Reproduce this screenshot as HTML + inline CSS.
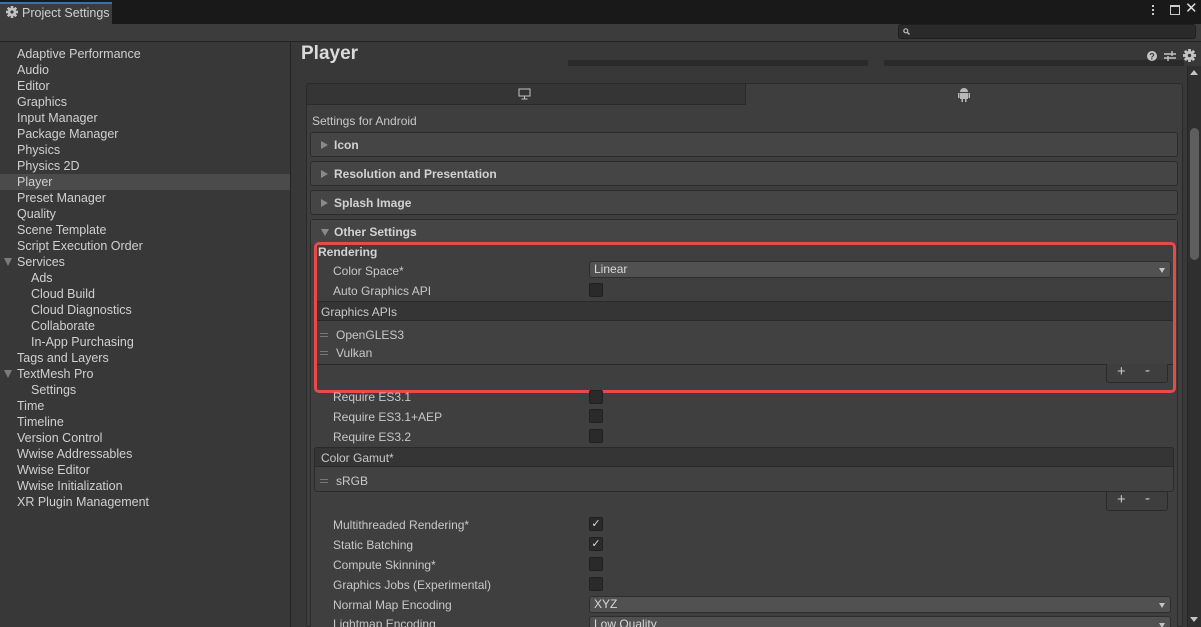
<!DOCTYPE html>
<html><head><meta charset="utf-8"><style>
*{margin:0;padding:0;box-sizing:border-box}
html{width:1201px;height:627px;overflow:hidden}
body{width:1201px;height:627px;overflow:hidden;background:#383838;font-family:"Liberation Sans",sans-serif;font-size:12px;color:#c8c8c8;position:relative}
.a{position:absolute}
.t{position:absolute;white-space:nowrap;line-height:14px}
.side .t{left:17px}
.fold{position:absolute;left:310px;width:868px;background:#454545;border:1px solid #2b2b2b;border-radius:3px}
.fold b{position:absolute;left:23px;top:5px;font-size:12px;color:#d2d2d2}
.tri{position:absolute;left:10px;top:8px;width:0;height:0;border-left:7px solid #8a8a8a;border-top:4px solid transparent;border-bottom:4px solid transparent}
.cb{position:absolute;left:589px;width:14px;height:14px;background:#2a2a2a;border:1px solid #202020;border-radius:2px}
.dd{position:absolute;left:589px;width:582px;height:17px;background:#515151;border:1px solid #2e2e2e;border-radius:3px;padding-left:4px;line-height:15px;color:#d8d8d8}
.dd:after{content:"";position:absolute;right:5px;top:6px;border-top:5px solid #c4c4c4;border-left:3.5px solid transparent;border-right:3.5px solid transparent}
.hb{position:absolute;width:8px;height:4px;border-top:1px solid #777;border-bottom:1px solid #777}
.pm{position:absolute;width:62px;height:19px;background:#3e3e3e;border:1px solid #2a2a2a;border-top:none;border-radius:0 0 3px 3px;color:#c8c8c8;font-size:15px}
</style></head><body>
<svg width="0" height="0" style="position:absolute"><defs><g id="gear"><g fill="#c4c4c4"><rect x="4.7" y="0" width="2.6" height="12"/><rect x="0" y="4.7" width="12" height="2.6"/><rect x="4.7" y="0" width="2.6" height="12" transform="rotate(45 6 6)"/><rect x="4.7" y="0" width="2.6" height="12" transform="rotate(-45 6 6)"/><circle cx="6" cy="6" r="4.2"/></g><circle cx="6" cy="6" r="1.6" fill="#3a3a3a"/></g></defs></svg>
<!-- title bar -->
<div class="a" style="left:0;top:0;width:1201px;height:24px;background:#191919"></div>
<div class="a" style="left:0;top:2px;width:112px;height:22px;background:#3c3c3c;border-top:2px solid #3a72b0"></div>
<svg class="a" style="left:6px;top:6px" width="12" height="12"><use href="#gear"/></svg>
<div class="t" style="left:22px;top:6px;color:#d0d0d0;font-size:12.5px">Project Settings</div>
<div class="a" style="left:1152px;top:5px;width:2px;height:2px;background:#ccc;box-shadow:0 4px #ccc,0 8px #ccc"></div>
<div class="a" style="left:1170px;top:5px;width:10px;height:10px;border:1px solid #ccc;border-top-width:2px"></div>
<div class="t" style="left:1185px;top:2px;font-size:15px;color:#ddd">✕</div>
<!-- toolbar -->
<div class="a" style="left:0;top:24px;width:1201px;height:18px;background:#3c3c3c;border-bottom:1px solid #232323"></div>
<div class="a" style="left:898px;top:24px;width:298px;height:15px;background:#2a2a2a;border:1px solid #1f1f1f;border-radius:3px"></div>
<svg class="a" style="left:903px;top:28px" width="7" height="7"><circle cx="2.8" cy="2.8" r="2" fill="none" stroke="#bbb" stroke-width="1.2"/><path d="M4 4L6.5 6.5" stroke="#bbb" stroke-width="1.4"/></svg>
<!-- sidebar -->
<div class="a" style="left:290px;top:42px;width:1px;height:585px;background:#232323"></div>
<div class="a" style="left:0;top:174px;width:290px;height:16px;background:#4b4b4b"></div>
<div class="side" style="font-size:12.5px;color:#d0d0d0">
<div class="t" style="top:47px">Adaptive Performance</div>
<div class="t" style="top:63px">Audio</div>
<div class="t" style="top:79px">Editor</div>
<div class="t" style="top:95px">Graphics</div>
<div class="t" style="top:111px">Input Manager</div>
<div class="t" style="top:127px">Package Manager</div>
<div class="t" style="top:143px">Physics</div>
<div class="t" style="top:159px">Physics 2D</div>
<div class="t" style="top:175px">Player</div>
<div class="t" style="top:191px">Preset Manager</div>
<div class="t" style="top:207px">Quality</div>
<div class="t" style="top:223px">Scene Template</div>
<div class="t" style="top:239px">Script Execution Order</div>
<div class="t" style="top:255px">Services</div>
<div class="t" style="top:271px;left:31px">Ads</div>
<div class="t" style="top:287px;left:31px">Cloud Build</div>
<div class="t" style="top:303px;left:31px">Cloud Diagnostics</div>
<div class="t" style="top:319px;left:31px">Collaborate</div>
<div class="t" style="top:335px;left:31px">In-App Purchasing</div>
<div class="t" style="top:351px">Tags and Layers</div>
<div class="t" style="top:367px">TextMesh Pro</div>
<div class="t" style="top:383px;left:31px">Settings</div>
<div class="t" style="top:399px">Time</div>
<div class="t" style="top:415px">Timeline</div>
<div class="t" style="top:431px">Version Control</div>
<div class="t" style="top:447px">Wwise Addressables</div>
<div class="t" style="top:463px">Wwise Editor</div>
<div class="t" style="top:479px">Wwise Initialization</div>
<div class="t" style="top:495px">XR Plugin Management</div>
</div>
<div class="a" style="left:4px;top:258px;border-top:8px solid #7a7a7a;border-left:4.5px solid transparent;border-right:4.5px solid transparent"></div>
<div class="a" style="left:4px;top:370px;border-top:8px solid #7a7a7a;border-left:4.5px solid transparent;border-right:4.5px solid transparent"></div>
<!-- main header -->
<div class="a" style="left:568px;top:60px;width:300px;height:10px;background:#2a2a2a;border-radius:0 0 3px 3px"></div>
<div class="a" style="left:884px;top:60px;width:300px;height:10px;background:#2a2a2a;border-radius:0 0 3px 3px"></div>
<div class="t" style="left:301px;top:43px;font-size:19px;line-height:22px;color:#dadada;font-weight:bold;background:#383838;padding-right:8px">Player</div>
<svg class="a" style="left:1146px;top:50px" width="12" height="12"><circle cx="6" cy="6" r="5" fill="#c4c4c4"/><text x="6" y="9.5" font-size="9" font-weight="bold" text-anchor="middle" fill="#383838" font-family="Liberation Sans">?</text></svg>
<svg class="a" style="left:1164px;top:50px" width="12" height="12" stroke="#c4c4c4" stroke-width="1.4"><path d="M0 4H12M0 8H12M8 1V6M4 6V11"/></svg>
<svg class="a" style="left:1183px;top:49px" width="13" height="13" viewBox="0 0 12 12"><use href="#gear"/></svg>
<div class="a" style="left:295px;top:66px;width:890px;height:561px;background:#383838"></div>
<!-- platform box -->
<div class="a" style="left:306px;top:83px;width:877px;height:544px;background:#3e3e3e;border:1px solid #2a2a2a;border-radius:3px"></div>
<div class="a" style="left:306px;top:83px;width:440px;height:22px;background:#353535;border:1px solid #2a2a2a;border-radius:3px 0 0 0"></div>
<svg class="a" style="left:518px;top:88px" width="13" height="12" stroke="#c4c4c4" fill="none"><rect x="1" y="1" width="11" height="7"/><path d="M6.5 8V11M3.5 11H9.5"/></svg>
<svg class="a" style="left:958px;top:87px" width="12" height="15" fill="#b8b8b8"><path d="M2 5A4 4 0 0 1 10 5Z"/><rect x="2" y="6" width="8" height="6"/><rect x="0" y="6" width="1.5" height="5"/><rect x="10.5" y="6" width="1.5" height="5"/><rect x="3.5" y="12" width="1.5" height="3"/><rect x="7" y="12" width="1.5" height="3"/></svg>
<div class="t" style="left:312px;top:114px">Settings for Android</div>
<div class="fold" style="top:132px;height:25px"><i class="tri"></i><b>Icon</b></div>
<div class="fold" style="top:161px;height:25px"><i class="tri"></i><b>Resolution and Presentation</b></div>
<div class="fold" style="top:190px;height:25px"><i class="tri"></i><b>Splash Image</b></div>
<div class="fold" style="top:219px;height:408px;background:#3f3f3f;border-bottom:none;border-radius:3px 3px 0 0"><div class="a" style="left:0;top:0;width:866px;height:24px;background:#454545"></div><i class="a" style="left:10px;top:9px;border-top:7px solid #8a8a8a;border-left:4px solid transparent;border-right:4px solid transparent"></i><b>Other Settings</b></div>
<!-- rendering -->
<div class="t" style="left:318px;top:245px;font-weight:bold;color:#d2d2d2">Rendering</div>
<div class="t" style="left:333px;top:264px">Color Space*</div>
<div class="dd" style="top:261px">Linear</div>
<div class="t" style="left:333px;top:284px">Auto Graphics API</div>
<div class="cb" style="top:283px"></div>
<div class="a" style="left:314px;top:301px;width:860px;height:81px;background:#414141;border:1px solid #2a2a2a;border-radius:3px"></div>
<div class="a" style="left:314px;top:301px;width:860px;height:20px;background:#353535;border:1px solid #2a2a2a;border-radius:3px 3px 0 0"></div>
<div class="t" style="left:321px;top:305px">Graphics APIs</div>
<div class="hb" style="left:320px;top:333px"></div><div class="t" style="left:336px;top:328px">OpenGLES3</div>
<div class="hb" style="left:320px;top:351px"></div><div class="t" style="left:336px;top:346px">Vulkan</div>
<div class="a" style="left:314px;top:364px;width:860px;height:27px;background:#3f3f3f;border-top:1px solid #2a2a2a"></div>
<div class="pm" style="left:1106px;top:364px"><span class="a" style="left:10px;top:-1px">+</span><span class="a" style="left:38px;top:-2px">-</span></div>
<div class="a" style="left:314px;top:242px;width:862px;height:151px;border:3px solid #e84a4a;border-radius:5px"></div>
<div class="t" style="left:333px;top:390px">Require ES3.1</div><div class="cb" style="top:390px"></div>
<div class="t" style="left:333px;top:410px">Require ES3.1+AEP</div><div class="cb" style="top:409px"></div>
<div class="t" style="left:333px;top:430px">Require ES3.2</div><div class="cb" style="top:429px"></div>
<div class="a" style="left:314px;top:447px;width:860px;height:45px;background:#414141;border:1px solid #2a2a2a;border-radius:3px"></div>
<div class="a" style="left:314px;top:447px;width:860px;height:20px;background:#353535;border:1px solid #2a2a2a;border-radius:3px 3px 0 0"></div>
<div class="t" style="left:321px;top:451px">Color Gamut*</div>
<div class="hb" style="left:320px;top:479px"></div><div class="t" style="left:336px;top:474px">sRGB</div>
<div class="pm" style="left:1106px;top:492px"><span class="a" style="left:10px;top:-1px">+</span><span class="a" style="left:38px;top:-2px">-</span></div>
<div class="t" style="left:333px;top:518px">Multithreaded Rendering*</div><div class="cb" style="top:517px;color:#ddd;font-size:11px;line-height:12px;text-align:center">✓</div>
<div class="t" style="left:333px;top:538px">Static Batching</div><div class="cb" style="top:537px;color:#ddd;font-size:11px;line-height:12px;text-align:center">✓</div>
<div class="t" style="left:333px;top:558px">Compute Skinning*</div><div class="cb" style="top:557px"></div>
<div class="t" style="left:333px;top:578px">Graphics Jobs (Experimental)</div><div class="cb" style="top:577px"></div>
<div class="t" style="left:333px;top:598px">Normal Map Encoding</div><div class="dd" style="top:596px">XYZ</div>
<div class="t" style="left:333px;top:617px">Lightmap Encoding</div><div class="dd" style="top:616px;height:11px;border-bottom:none;border-radius:3px 3px 0 0">Low Quality</div>
<!-- scrollbar -->
<div class="a" style="left:1187px;top:66px;width:14px;height:561px;background:#2f2f2f;border-left:1px solid #262626"></div>
<div class="a" style="left:1190px;top:128px;width:9px;height:132px;background:#5e5e5e;border-radius:5px"></div>
<div class="a" style="left:1190px;top:70px;border-bottom:5px solid #c4c4c4;border-left:4px solid transparent;border-right:4px solid transparent"></div>
<div class="a" style="left:1190px;top:617px;border-top:5px solid #c4c4c4;border-left:4px solid transparent;border-right:4px solid transparent"></div>
</body></html>
